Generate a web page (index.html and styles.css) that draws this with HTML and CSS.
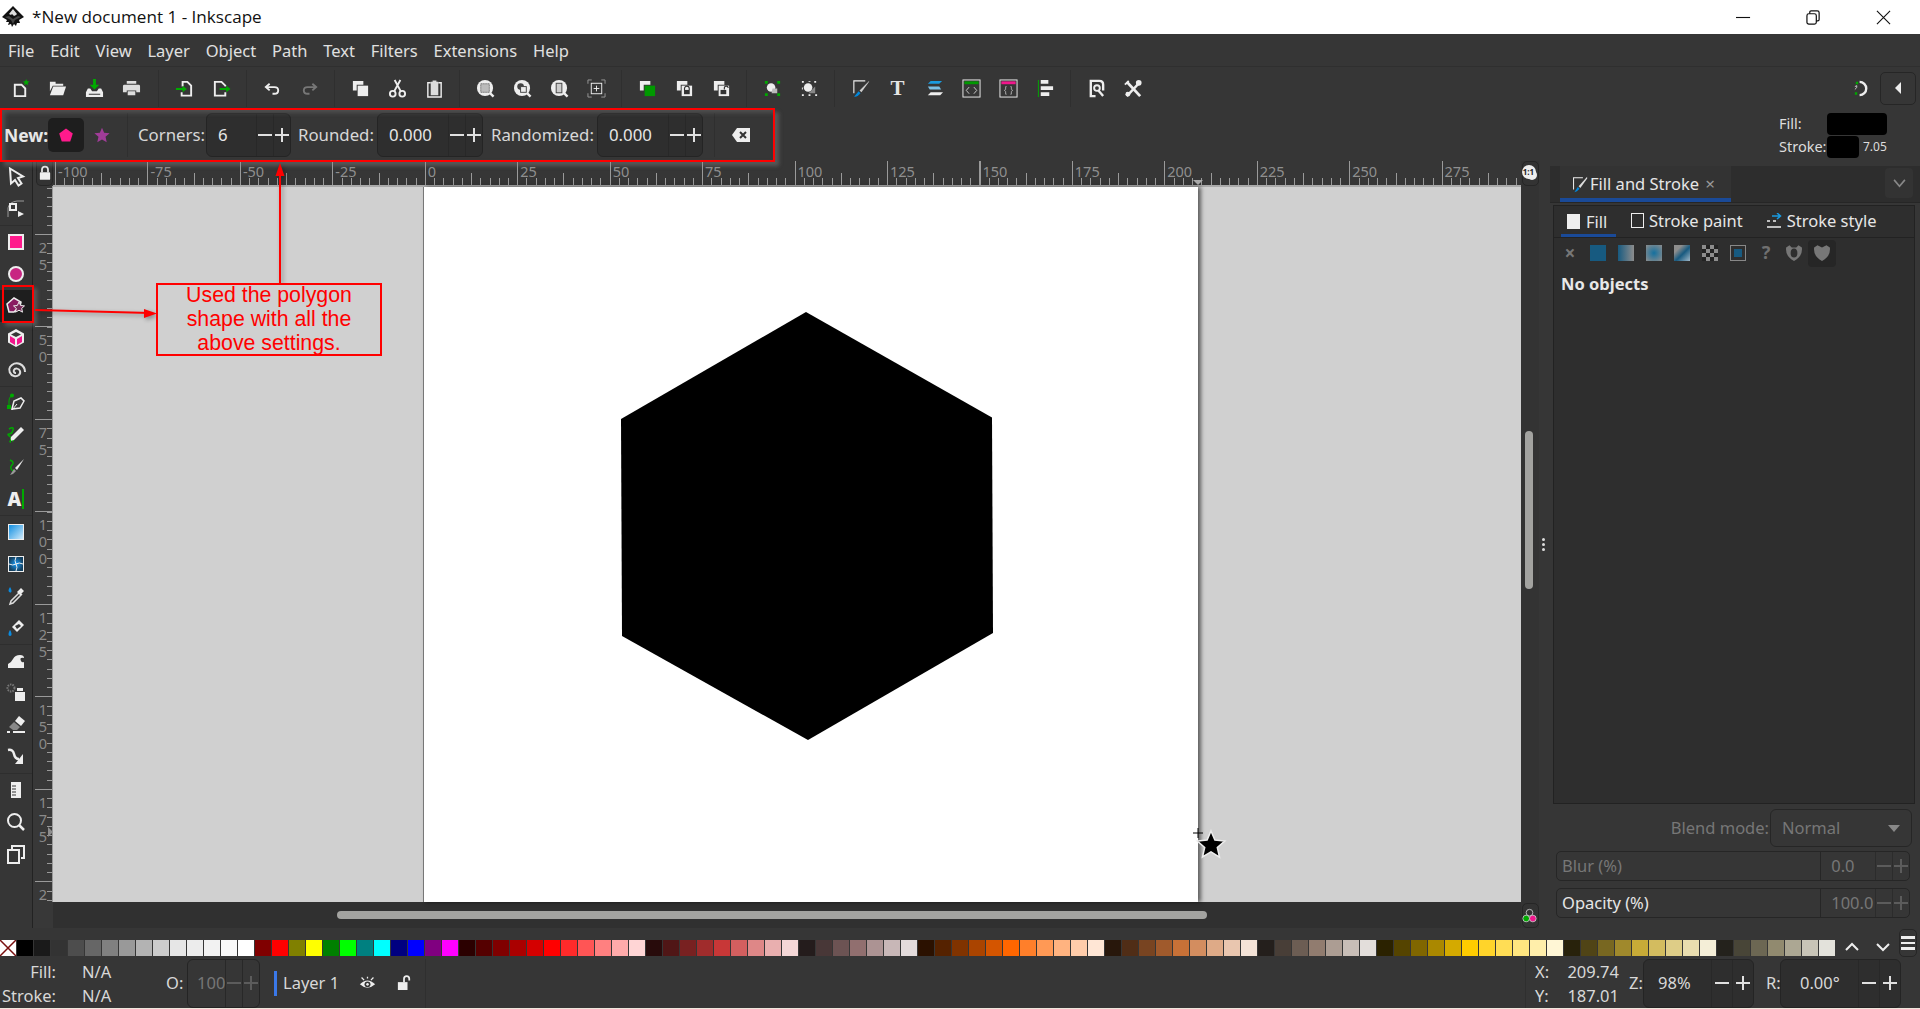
FILE: index.html
```html
<!DOCTYPE html>
<html lang="en">
<head>
<meta charset="utf-8">
<title>*New document 1 - Inkscape</title>
<link rel="stylesheet" href="styles.css">
</head>
<body>
<div class="app">

<header class="titlebar">
  <svg class="logo" viewBox="0 0 24 24"><path d="M12 1L1 12l5 3-1 2h3l-1 3 3-1 1 3 2-3 2 2 1-3h3l-1-3 5-3z" fill="#111"/><path d="M12 4l-4 5 2 1 1-1 2 2 2-1 1-1z" fill="#ddd"/><path d="M4 12l4-1 4 3 5-3 3 1-6 3-2 4-2-4z" fill="#444"/></svg>
  <span class="doc-title">*New document 1 - Inkscape</span>
  <div class="winbtns">
    <svg viewBox="0 0 16 16"><path d="M0 8h15" stroke="#111" stroke-width="1.2"/></svg>
    <svg viewBox="0 0 16 16"><rect x="1" y="4" width="10" height="11" rx="2" fill="none" stroke="#111" stroke-width="1.3"/><path d="M4 4V2.500Q4 1 5.500 1H12q2 0 2 2v7q0 1.500-1.500 1.500H11" fill="none" stroke="#111" stroke-width="1.3"/></svg>
    <svg viewBox="0 0 16 16"><path d="M1 1l14 14M15 1L1 15" stroke="#111" stroke-width="1.2"/></svg>
  </div>
</header>

<nav class="menubar">
  <span>File</span><span>Edit</span><span>View</span><span>Layer</span><span>Object</span><span>Path</span><span>Text</span><span>Filters</span><span>Extensions</span><span>Help</span>
</nav>

<div class="commandbar">
  <div class="cgroup first">
    <svg class="ic" viewBox="0 0 20 20"><path d="M4 6h7l4 4v8H4z" fill="none" stroke="#eee" stroke-width="2"/><path d="M16 0l1 2.400 2.500.2-1.900 1.600.6 2.400-2.200-1.300-2.200 1.300.6-2.400-1.900-1.600 2.500-.2z" fill="#0a0"/></svg>
    <svg class="ic" viewBox="0 0 20 20"><path d="M2 3h6v2h8v2H5l-3 6z" fill="#eee"/><path d="M5.500 8H19l-3 9H2z" fill="#eee"/></svg>
    <svg class="ic" viewBox="0 0 20 20"><path d="M8.500 0h3v6H15l-5 5-5-5h3.500z" fill="#0a0"/><path d="M3 10h2.500l2 3h5l2-3H17l2 4v5H1v-5zM4 15.500v1h12v-1z" fill="#eee" fill-rule="evenodd"/></svg>
    <svg class="ic" viewBox="0 0 20 20"><path d="M5 2h10v3H5zM1 7.500Q1 6 2.500 6h15Q19 6 19 7.500V14h-4v-2H5v2H1zM6 13h8v4H6z" fill="#ddd"/></svg>
  </div>
  <div class="cgroup">
    <svg class="ic" viewBox="0 0 20 20"><path d="M8 8V3h5l4 4v10.500H7V14" fill="none" stroke="#eee" stroke-width="2"/><path d="M1 9.500h7V7l4.500 3.500L8 14v-2.500H1z" fill="#0a0"/></svg>
    <svg class="ic" viewBox="0 0 20 20"><path d="M14 8V7l-4-4H3v14.500h11V14" fill="none" stroke="#eee" stroke-width="2"/><path d="M8 9.500h7V7l4.500 3.500L15 14v-2.500H8z" fill="#0a0"/></svg>
  </div>
  <div class="cgroup">
    <svg class="ic" viewBox="0 0 20 20"><path d="M7 5L3 8.500 7 12" fill="none" stroke="#eee" stroke-width="2"/><path d="M4 8.500h8q4 0 4 3.500t-4 3.500h-2" fill="none" stroke="#eee" stroke-width="2"/></svg>
    <svg class="ic" viewBox="0 0 20 20"><path d="M13 5l4 3.500-4 3.500" fill="none" stroke="#777" stroke-width="2"/><path d="M16 8.500H8Q4 8.500 4 12t4 3.500h2" fill="none" stroke="#777" stroke-width="2"/></svg>
  </div>
  <div class="cgroup">
    <svg class="ic" viewBox="0 0 20 20"><path d="M2 2h11v4H6v6H2z" fill="#eee"/><rect x="7" y="7" width="11" height="11" fill="#eee"/></svg>
    <svg class="ic" viewBox="0 0 20 20"><circle cx="5" cy="15.500" r="3" fill="none" stroke="#eee" stroke-width="2"/><circle cx="15" cy="15.500" r="3" fill="none" stroke="#eee" stroke-width="2"/><path d="M6.500 13L13 1M13.500 13L7 1" stroke="#eee" stroke-width="2"/></svg>
    <svg class="ic" viewBox="0 0 20 20"><path d="M6 4H3v15h14V4h-3" fill="none" stroke="#eee" stroke-width="1.500"/><path d="M6 3h2V1.500h4V3h2v14H6z" fill="#ddd"/></svg>
  </div>
  <div class="cgroup">
    <svg class="ic" viewBox="0 0 20 20"><path d="M14 14l4.500 4.500" stroke="#eee" stroke-width="2.500"/><circle cx="9.500" cy="9.500" r="8.500" fill="#eee"/><rect x="5" y="5" width="9" height="9" fill="#bbb" stroke="#444" stroke-dasharray="1 1"/></svg>
    <svg class="ic" viewBox="0 0 20 20"><path d="M14 14l4.500 4.500" stroke="#eee" stroke-width="2.500"/><circle cx="9.500" cy="9.500" r="8.500" fill="#eee"/><circle cx="8" cy="8" r="3.500" fill="#444"/><rect x="8" y="8" width="6" height="6" fill="#eee" stroke="#444"/></svg>
    <svg class="ic" viewBox="0 0 20 20"><path d="M14 14l4.500 4.500" stroke="#eee" stroke-width="2.500"/><circle cx="9.500" cy="9.500" r="8.500" fill="#eee"/><rect x="6" y="4" width="7" height="11" fill="#444"/><rect x="7" y="5" width="5" height="9" fill="#ccc"/></svg>
    <svg class="ic" viewBox="0 0 20 20"><path d="M1 5V1h4M15 1h4v4M19 15v4h-4M5 19H1v-4" fill="none" stroke="#999"/><rect x="4.500" y="4.500" width="11" height="11" fill="none" stroke="#eee"/><path d="M10 7v6M7 10h6" stroke="#eee"/></svg>
  </div>
  <div class="cgroup">
    <svg class="ic" viewBox="0 0 20 20"><path d="M2 2h11v4H6v6H2z" fill="#eee"/><rect x="7" y="7" width="11" height="11" fill="#090"/></svg>
    <svg class="ic" viewBox="0 0 20 20"><path d="M2 2h11v4H6v6H2z" fill="#eee"/><rect x="7" y="7" width="11" height="11" fill="#eee"/><path d="M10 11.500V10a2.500 2.500 0 0 1 5 0v1.500" fill="none" stroke="#333" stroke-width="1.200"/><rect x="9.500" y="11.500" width="6" height="4.500" fill="#333"/></svg>
    <svg class="ic" viewBox="0 0 20 20"><path d="M2 2h11v4H6v6H2z" fill="#eee"/><rect x="7" y="7" width="11" height="11" fill="#eee"/><path d="M13 11V9.500a2 2 0 0 1 4 0" fill="none" stroke="#333" stroke-width="1.200"/><rect x="9" y="11.500" width="6" height="4.500" fill="#333"/></svg>
  </div>
  <div class="cgroup">
    <svg class="ic" viewBox="0 0 20 20"><path d="M2 2h3v3H2zM15 2h3v3h-3zM2 15h3v3H2zM15 15h3v3h-3z" fill="#0a0"/><circle cx="8.500" cy="9" r="4.500" fill="#eee"/><path d="M10 10h5v5h-6z" fill="#bbb"/></svg>
    <svg class="ic" viewBox="0 0 20 20"><path d="M2 2h2v2H2zM15 2h2v2h-2zM2 16h2v2H2zM9 16h2v2H9zM16 16h2v2h-2zM2 9h1v2H2zM9 2h2v1H9z" fill="#eee"/><circle cx="8.500" cy="9" r="4.500" fill="#eee"/><path d="M16 8v7H9z" fill="#888"/></svg>
  </div>
  <div class="cgroup">
    <svg class="ic" viewBox="0 0 20 20"><path d="M15 2H3v13" fill="none" stroke="#eee" stroke-width="1.200"/><path d="M19 2L9 12l2 2L19 3z" fill="#ccc"/><path d="M8 13l2 2-3 3-4 1z" fill="#08d"/></svg>
    <span class="ic glyph-t">T</span>
    <svg class="ic" viewBox="0 0 20 20"><path d="M6 2h12l-3 3H3z" fill="#1a9be0"/><path d="M3 8h12l2 3H5z" fill="#7bc0e6"/><path d="M6 14h13l-3 3H3z" fill="#eee"/></svg>
    <svg class="ic" viewBox="0 0 20 20"><rect x="1" y="1" width="18" height="18" fill="none" stroke="#eee"/><rect x="2.500" y="2.500" width="15" height="3" fill="#090"/><path d="M7.500 8.500L4.500 12l3 3.500M12.500 8.500l3 3.500-3 3.500" fill="none" stroke="#ccc"/></svg>
    <svg class="ic" viewBox="0 0 20 20"><rect x="1" y="1" width="18" height="18" fill="none" stroke="#eee"/><rect x="2.500" y="2.500" width="15" height="3" fill="#f1168c"/><path d="M8 8H7v3l-1.500 1L7 13v3h1M12 8h1v3l1.500 1-1.500 1v3h-1" fill="none" stroke="#aaa"/></svg>
    <svg class="ic" viewBox="0 0 20 20"><path d="M2.500 1v18" stroke="#0a0"/><path d="M5 1h8v4H5zM5 7.500h13v4H5zM5 14h9v4H5z" fill="#eee"/></svg>
  </div>
  <div class="cgroup last">
    <svg class="ic" viewBox="0 0 20 20"><path d="M9 18H4V2h9q4 0 4 4v6" fill="none" stroke="#eee" stroke-width="2.500"/><circle cx="10.500" cy="9.500" r="3" fill="none" stroke="#eee" stroke-width="2"/><path d="M12 12l5 6" stroke="#eee" stroke-width="2.500"/></svg>
    <svg class="ic" viewBox="0 0 20 20"><path d="M3 3l14 15" stroke="#eee" stroke-width="3"/><path d="M17 3L3 18" stroke="#eee" stroke-width="2.500"/><path d="M1 6l4-4" stroke="#eee" stroke-width="2"/><circle cx="15.500" cy="4" r="3" fill="#eee"/><circle cx="4" cy="16" r="2.500" fill="#eee"/></svg>
  </div>
  <div class="snap">
    <svg class="ic" viewBox="0 0 20 20"><path d="M8 3a7 7 0 1 1 0 14" fill="none" stroke="#eee" stroke-width="2.500"/><path d="M4 3h2.500v2.500H4zM3 14h2.500v2.500H3z" fill="#0a0"/><path d="M3 8l2-1v2l-2 2" fill="none" stroke="#ccc"/></svg>
    <div class="snap-btn"><span class="tri-left"></span></div>
  </div>
</div>

<div class="toolctl">
  <b class="new-lbl">New:</b>
  <div class="shape-btn on"><svg viewBox="0 0 20 20"><path d="M10 2l8.500 6.200-3.200 9.800H4.700L1.500 8.200z" fill="#ff1a8c"/></svg></div>
  <div class="shape-btn"><svg viewBox="0 0 20 20"><path d="M10 1l2.700 6.200 6.800.6-5.100 4.500 1.500 6.700L10 15.500 4.100 19l1.500-6.700L.5 7.800l6.800-.6z" fill="#a03c98"/></svg></div>
  <span class="vsep"></span>
  <span class="lbl w-corners">Corners:</span>
  <div class="spin s-corners"><span class="val">6</span><span class="sb minus"></span><span class="sb plus"></span></div>
  <span class="lbl w-rounded">Rounded:</span>
  <div class="spin s-rounded"><span class="val">0.000</span><span class="sb minus"></span><span class="sb plus"></span></div>
  <span class="lbl w-random">Randomized:</span>
  <div class="spin s-rounded"><span class="val">0.000</span><span class="sb minus"></span><span class="sb plus"></span></div>
  <span class="vsep s2"></span>
  <svg class="clear" viewBox="0 0 18 14"><path d="M5 0h13v14H5L0 7z" fill="#eee"/><path d="M8 4l6 6M14 4l-6 6" stroke="#333" stroke-width="2"/></svg>
  <div class="selstyle">
    <div class="ss-row"><span class="ss-lbl">Fill:</span><span class="ss-fill"></span></div>
    <div class="ss-row"><span class="ss-lbl">Stroke:</span><span class="ss-stroke"></span><span class="ss-w">7.05</span></div>
  </div>
</div>

<div class="workspace">
  <aside class="tools">
    <div class="tgroup">
      <div class="tool"><svg class="ic" viewBox="0 0 20 20"><path d="M4 1.500l13 8-5 1.500 3.500 5.500-3 2-3.500-5.500-4 3.500z" fill="#363636" stroke="#eee" stroke-width="2"/></svg></div>
      <div class="tool"><svg class="ic" viewBox="0 0 20 20"><path d="M2 18V9q1-6 9-7h7" fill="none" stroke="#999"/><rect x="4" y="5" width="6" height="6" fill="#363636" stroke="#eee" stroke-width="2"/><path d="M12 12l6 3-6 3z" fill="#eee"/></svg></div>
    </div>
    <div class="tgroup">
      <div class="tool"><svg class="ic" viewBox="0 0 20 20"><rect x="3" y="3" width="14" height="14" fill="#ff1a8c" stroke="#eee" stroke-width="2"/></svg></div>
      <div class="tool"><svg class="ic" viewBox="0 0 20 20"><circle cx="10" cy="10" r="7" fill="#c82682" stroke="#eee" stroke-width="2"/></svg></div>
      <div class="tool active"><svg class="ic" viewBox="0 0 20 20"><path d="M8 2l7 4-1 4-6 6H3l-2-8z" fill="#8a1c62" stroke="#eee" stroke-width="1.500"/><path d="M13 6l1.700 3.500 3.800.4-2.800 2.500.8 3.800-3.500-2-3.500 2 .8-3.800-2.800-2.500 3.800-.4z" fill="#7a2a5a" stroke="#eee"/></svg></div>
      <div class="tool"><svg class="ic" viewBox="0 0 20 20"><path d="M10 1l8 4.500v9L10 19l-8-4.500v-9z" fill="#eee"/><path d="M4 8l5 3v6l-5-3z" fill="#f1168c"/><path d="M16 8l-5 3v6l5-3z" fill="#f1168c"/><path d="M10 4l5 2.500-5 2.500-5-2.500z" fill="#363636"/></svg></div>
      <div class="tool"><svg class="ic" viewBox="0 0 20 20"><path d="M10 13a2 2 0 0 1-2-3c1-2 5-2 6 1s-2 6-6 5-6-6-4-9 6-5 10-3 5 6 5 8" fill="none" stroke="#ddd" stroke-width="2"/></svg></div>
    </div>
    <div class="tgroup">
      <div class="tool"><svg class="ic" viewBox="0 0 20 20"><path d="M3 15V8q0-5 5-6" fill="none" stroke="#0a0"/><circle cx="6" cy="2.500" r="2" fill="#0a0"/><rect x="1" y="12" width="4" height="4" fill="#0a0"/><path d="M6 16l2-8 7-3 3 3-4 7z" fill="none" stroke="#eee" stroke-width="1.500"/><path d="M6 17l5-6" stroke="#eee"/></svg></div>
      <div class="tool"><svg class="ic" viewBox="0 0 20 20"><path d="M3 4q5-3 4 1T3 9t3 4q3 2 0 3" fill="none" stroke="#0a0" stroke-width="1.500"/><path d="M15 2l3 3L8 15l-4 1 1-4z" fill="#eee"/><path d="M5 13l-2 4 2 1z" fill="#0a0"/></svg></div>
      <div class="tool"><svg class="ic" viewBox="0 0 20 20"><path d="M4 3q5 2 2 5t1 6" fill="none" stroke="#0a0" stroke-width="1.500"/><path d="M18 2L9 11l2 2z" fill="#eee"/><path d="M8 12l2 2-3 3-3 1z" fill="#999"/></svg></div>
      <div class="tool"><span class="glyph-a">A</span></div>
    </div>
    <div class="tgroup">
      <div class="tool"><svg class="ic" viewBox="0 0 20 20"><defs><linearGradient id="tg" x1="0" y1="0" x2="1" y2="1"><stop offset="0" stop-color="#0a8be0"/><stop offset="1" stop-color="#d8eefb"/></linearGradient></defs><rect x="2.500" y="2.500" width="15" height="15" fill="url(#tg)" stroke="#eee"/></svg></div>
      <div class="tool"><svg class="ic" viewBox="0 0 20 20"><defs><radialGradient id="tm"><stop offset="0" stop-color="#1aa0ff"/><stop offset="1" stop-color="#14405f"/></radialGradient></defs><rect x="2.500" y="2.500" width="15" height="15" fill="url(#tm)" stroke="#eee"/><path d="M3 10q4 2 7 0t7 0M10 3q-2 4 0 7t0 7" fill="none" stroke="#eee"/></svg></div>
      <div class="tool"><svg class="ic" viewBox="0 0 20 20"><path d="M4 1c-2 3-2 5 0 5.500S6 4 4 1z" fill="#0a8be0"/><path d="M14 6L5 15l-1 3 3-1 9-9" fill="none" stroke="#ddd" stroke-width="1.500"/><path d="M12 5l3-3 3 3-3 3 1 1-2 0-3-3z" fill="#eee"/></svg></div>
      <div class="tool"><svg class="ic" viewBox="0 0 20 20"><path d="M4 12c-2 3-2 6 0 6s2-3 0-6z" fill="#0a8be0"/><path d="M6 9l7-7 5 5-7 7z" fill="#eee"/><path d="M9 8l4-2 2 2-4 3z" fill="#363636"/></svg></div>
    </div>
    <div class="tgroup">
      <div class="tool"><svg class="ic" viewBox="0 0 20 20"><path d="M2 17v-4q3-1 5-5t7-4q4 0 4 3-5-1-3 3 1 2 3 1v6z" fill="#eee"/></svg></div>
      <div class="tool"><svg class="ic" viewBox="0 0 20 20"><rect x="9" y="9" width="10" height="9" fill="#eee"/><rect x="11" y="5" width="6" height="3" fill="#eee"/><circle cx="5" cy="5" r="3.500" fill="none" stroke="#777" stroke-width="2" stroke-dasharray="1.500 1"/></svg></div>
      <div class="tool"><svg class="ic" viewBox="0 0 20 20"><path d="M13 1l6 5-4 5-6-5z" fill="#eee"/><path d="M8 7l6 5-3 3H7l-4-3z" fill="#888"/><path d="M1 16h3v2H1zM7 16h12v2H7z" fill="#eee"/></svg></div>
      <div class="tool"><svg class="ic" viewBox="0 0 20 20"><path d="M2 3q5-1 6 4t5 5" fill="none" stroke="#eee" stroke-width="2.500"/><path d="M17 7v10h-8z" fill="#eee"/></svg></div>
    </div>
    <div class="tgroup nb">
      <div class="tool"><svg class="ic" viewBox="0 0 20 20"><path d="M5 2h10v16H5z" fill="#eee"/><path d="M6 6h4M6 9h4M6 12h4M6 15h4" stroke="#333"/></svg></div>
      <div class="tool"><svg class="ic" viewBox="0 0 20 20"><circle cx="8.500" cy="8.500" r="6.500" fill="none" stroke="#eee" stroke-width="2"/><path d="M13 13l5 5" stroke="#eee" stroke-width="2.500"/></svg></div>
      <div class="tool"><svg class="ic" viewBox="0 0 20 20"><rect x="2" y="6" width="11" height="13" fill="none" stroke="#eee" stroke-width="2"/><path d="M6 5V2h12v12h-3" fill="none" stroke="#eee" stroke-width="2"/></svg></div>
    </div>
  </aside>

  <div class="vcol">
    <div class="lockbox"><svg viewBox="0 0 14 18"><path d="M3.500 8V5a3.500 3.500 0 0 1 7 0v3" fill="none" stroke="#eee" stroke-width="2"/><rect x="1" y="8" width="12" height="9" rx="1" fill="#eee"/></svg></div>
    <div class="vruler">
      <div class="vmark">2<br>5</div><div class="vmark">5<br>0</div><div class="vmark">7<br>5</div><div class="vmark">1<br>0<br>0</div><div class="vmark">1<br>2<br>5</div><div class="vmark">1<br>5<br>0</div><div class="vmark">1<br>7<br>5</div><div class="vmark last">2</div>
      <span class="vpointer"></span>
    </div>
  </div>

  <div class="center">
    <div class="hruler">
      <span class="hmark">-100</span><span class="hmark">-75</span><span class="hmark">-50</span><span class="hmark">-25</span><span class="hmark">0</span><span class="hmark">25</span><span class="hmark">50</span><span class="hmark">75</span><span class="hmark">100</span><span class="hmark">125</span><span class="hmark">150</span><span class="hmark">175</span><span class="hmark">200</span><span class="hmark">225</span><span class="hmark">250</span><span class="hmark">275</span>
      <span class="hpointer"></span>
    </div>
    <div class="canvas">
      <div class="page">
        <svg class="art" viewBox="0 1 774 715"><path d="M382 126L568 231.500 569 447 384 554 198 450 197 233z" fill="#000"/></svg>
      </div>
      <svg class="cursor" viewBox="0 0 40 40"><path d="M6 2v10M1 7h10" stroke="#000"/><path d="M19 5l3.900 9.100 9.800.9-7.400 6.500 2.200 9.600L19 25.900 10.500 31l2.200-9.600L5.300 15l9.800-.9z" fill="#000" stroke="#eee" stroke-width="1.500"/></svg>
    </div>
    <div class="hscroll"><span class="hthumb"></span></div>
  </div>

  <div class="rcol">
    <div class="corner-btn one"><span class="one-t">1:1</span></div>
    <span class="vthumb"></span>
    <div class="corner-btn color"><svg viewBox="0 0 18 24"><circle cx="9" cy="8" r="4" fill="none" stroke="#ccc"/><circle cx="5" cy="15" r="4" fill="#0a0" stroke="#ccc"/><circle cx="13" cy="15" r="4" fill="#f1168c" stroke="#ccc"/></svg></div>
  </div>

  <div class="handle"><i></i><i></i><i></i></div>

  <section class="dock">
    <div class="dock-tabs">
      <div class="dock-tab">
        <svg class="ic-s" viewBox="0 0 20 20"><path d="M14 2H3v14" fill="none" stroke="#eee" stroke-width="1.200"/><path d="M19 1L9 12l2 2L19 3z" fill="#ddd"/><path d="M8 13l2 2-3 3-3 1z" fill="#08d"/></svg>
        <span>Fill and Stroke</span><span class="tab-x">×</span>
      </div>
      <div class="dock-menu"><svg viewBox="0 0 14 10"><path d="M1 1l6 7 6-7" fill="none" stroke="#888" stroke-width="1.800"/></svg></div>
    </div>
    <div class="frame">
      <div class="fs-tabs">
        <div class="fs-tab on"><span class="box-fill"></span>Fill</div>
        <div class="fs-tab t2"><span class="box-stroke"></span>Stroke paint</div>
        <div class="fs-tab t3"><svg class="ic-m" viewBox="0 0 16 16"><path d="M6 3h8M11 0l3.500 3L11 6" fill="none" stroke="#1a9be0" stroke-width="1.500"/><path d="M1 8h3M7 8h3M1 14h14" stroke="#eee" stroke-width="1.500"/></svg>Stroke style</div>
      </div>
      <div class="paints">
        <span class="paint"><span class="p-x">×</span></span>
        <span class="paint"><span class="p flat"></span></span>
        <span class="paint"><span class="p lin"></span></span>
        <span class="paint"><span class="p rad"></span></span>
        <span class="paint"><span class="p mesh"></span></span>
        <span class="paint"><span class="p pat"></span></span>
        <span class="paint"><span class="p swa"></span></span>
        <span class="paint"><span class="p-q">?</span></span>
        <span class="paint"><svg class="ic-m" viewBox="0 0 16 16"><path d="M1 3l3-2 2 2h4l2-2 3 2q1 8-7 12Q0 11 1 3z" fill="#777"/><ellipse cx="8" cy="8" rx="3" ry="4" fill="#2e2e2e"/></svg></span>
        <span class="paint sel"><svg class="ic-m" viewBox="0 0 16 16"><path d="M1 3l3-2 4 2 4-2 3 2q1 8-7 12Q0 11 1 3z" fill="#777"/></svg></span>
      </div>
      <b class="noobj">No objects</b>
    </div>
    <div class="blend-row">
      <span class="dim">Blend mode:</span>
      <div class="combo"><span class="dim">Normal</span><span class="tri-down"></span></div>
    </div>
    <div class="slider-row">
      <span class="sl-lbl dim">Blur (%)</span>
      <span class="sl-val dim">0.0</span><span class="sb minus off"></span><span class="sb plus off"></span>
    </div>
    <div class="slider-row second">
      <span class="sl-lbl">Opacity (%)</span>
      <span class="sl-val dim">100.0</span><span class="sb minus off"></span><span class="sb plus off"></span>
    </div>
  </section>
</div>

<div class="palette">
  <div class="swatches">
    <span class="sw none"><svg viewBox="0 0 16 16" preserveAspectRatio="none"><path d="M0 0l16 16M16 0L0 16" stroke="#7a1010" stroke-width="1.500"/></svg></span>
    <span class="sw" style="background:#000"></span><span class="sw" style="background:#1a1a1a"></span><span class="sw" style="background:#333"></span><span class="sw" style="background:#4d4d4d"></span><span class="sw" style="background:#666"></span><span class="sw" style="background:#808080"></span><span class="sw" style="background:#999"></span><span class="sw" style="background:#b3b3b3"></span><span class="sw" style="background:#ccc"></span><span class="sw" style="background:#e6e6e6"></span><span class="sw" style="background:#ececec"></span><span class="sw" style="background:#f2f2f2"></span><span class="sw" style="background:#f9f9f9"></span><span class="sw" style="background:#fff"></span>
    <span class="sw" style="background:#800000"></span><span class="sw" style="background:#f00"></span><span class="sw" style="background:#808000"></span><span class="sw" style="background:#ff0"></span><span class="sw" style="background:#008000"></span><span class="sw" style="background:#0f0"></span><span class="sw" style="background:#008080"></span><span class="sw" style="background:#0ff"></span><span class="sw" style="background:#000080"></span><span class="sw" style="background:#00f"></span><span class="sw" style="background:#800080"></span><span class="sw" style="background:#f0f"></span>
    <span class="sw" style="background:#2b0000"></span><span class="sw" style="background:#500"></span><span class="sw" style="background:#800000"></span><span class="sw" style="background:#a00"></span><span class="sw" style="background:#d40000"></span><span class="sw" style="background:#f00"></span><span class="sw" style="background:#ff2a2a"></span><span class="sw" style="background:#f55"></span><span class="sw" style="background:#ff8080"></span><span class="sw" style="background:#faa"></span><span class="sw" style="background:#ffd5d5"></span>
    <span class="sw" style="background:#280b0b"></span><span class="sw" style="background:#501616"></span><span class="sw" style="background:#782121"></span><span class="sw" style="background:#a02c2c"></span><span class="sw" style="background:#c83737"></span><span class="sw" style="background:#d35f5f"></span><span class="sw" style="background:#de8787"></span><span class="sw" style="background:#e9afaf"></span><span class="sw" style="background:#f4d7d7"></span>
    <span class="sw" style="background:#241c1c"></span><span class="sw" style="background:#483737"></span><span class="sw" style="background:#6c5353"></span><span class="sw" style="background:#916f6f"></span><span class="sw" style="background:#ac9393"></span><span class="sw" style="background:#c8b7b7"></span><span class="sw" style="background:#e3dbdb"></span>
    <span class="sw" style="background:#2b1100"></span><span class="sw" style="background:#520"></span><span class="sw" style="background:#803300"></span><span class="sw" style="background:#a40"></span><span class="sw" style="background:#d45500"></span><span class="sw" style="background:#f60"></span><span class="sw" style="background:#ff7f2a"></span><span class="sw" style="background:#f95"></span><span class="sw" style="background:#ffb380"></span><span class="sw" style="background:#fca"></span><span class="sw" style="background:#ffe6d5"></span>
    <span class="sw" style="background:#28170b"></span><span class="sw" style="background:#502d16"></span><span class="sw" style="background:#784421"></span><span class="sw" style="background:#a05a2c"></span><span class="sw" style="background:#c87137"></span><span class="sw" style="background:#d38d5f"></span><span class="sw" style="background:#deaa87"></span><span class="sw" style="background:#e9c6af"></span><span class="sw" style="background:#f4e3d7"></span>
    <span class="sw" style="background:#241f1c"></span><span class="sw" style="background:#483e37"></span><span class="sw" style="background:#6c5d53"></span><span class="sw" style="background:#917c6f"></span><span class="sw" style="background:#ac9d93"></span><span class="sw" style="background:#c8beb7"></span><span class="sw" style="background:#e3dedb"></span>
    <span class="sw" style="background:#2b2200"></span><span class="sw" style="background:#540"></span><span class="sw" style="background:#806600"></span><span class="sw" style="background:#a80"></span><span class="sw" style="background:#d4aa00"></span><span class="sw" style="background:#fc0"></span><span class="sw" style="background:#ffd42a"></span><span class="sw" style="background:#fd5"></span><span class="sw" style="background:#ffe680"></span><span class="sw" style="background:#fea"></span><span class="sw" style="background:#fff6d5"></span>
    <span class="sw" style="background:#28220b"></span><span class="sw" style="background:#504416"></span><span class="sw" style="background:#786721"></span><span class="sw" style="background:#a0892c"></span><span class="sw" style="background:#c8ab37"></span><span class="sw" style="background:#d3bc5f"></span><span class="sw" style="background:#decd87"></span><span class="sw" style="background:#e9ddaf"></span><span class="sw" style="background:#f4eed7"></span>
    <span class="sw" style="background:#24221c"></span><span class="sw" style="background:#484537"></span><span class="sw" style="background:#6c6753"></span><span class="sw" style="background:#918a6f"></span><span class="sw" style="background:#aca793"></span><span class="sw" style="background:#c8c4b7"></span><span class="sw" style="background:#e3e2db"></span>
  </div>
  <svg class="chev up" viewBox="0 0 14 10"><path d="M1 8l6-6 6 6" fill="none" stroke="#eee" stroke-width="2"/></svg>
  <svg class="chev" viewBox="0 0 14 10"><path d="M1 2l6 6 6-6" fill="none" stroke="#eee" stroke-width="2"/></svg>
  <div class="pal-menu"><i></i><i></i><i></i></div>
</div>

<footer class="status">
  <div class="st-style">
    <span class="st-l">Fill:</span><span>N/A</span>
    <span class="st-l">Stroke:</span><span>N/A</span>
  </div>
  <span class="st-o">O:</span>
  <div class="spin s-o"><span class="val dim">100</span><span class="sb minus off"></span><span class="sb plus off"></span></div>
  <span class="layer-mark"></span>
  <span class="layer-name">Layer 1</span>
  <svg class="st-eye" viewBox="0 0 20 16"><path d="M3 1l3 3M17 1l-3 3M10 0v2" stroke="#eee" stroke-width="1.500"/><path d="M1 9q9-9 18 0-9 8-18 0z" fill="#eee"/><circle cx="10" cy="9" r="3.500" fill="#333"/><circle cx="10" cy="9" r="1.500" fill="#eee"/></svg>
  <svg class="st-lock" viewBox="0 0 16 18"><path d="M8 8V4a3 3 0 0 1 6 0v2" fill="none" stroke="#eee" stroke-width="2"/><rect x="1" y="8" width="11" height="9" fill="#eee"/></svg>
  <span class="st-sep"></span>
  <div class="st-right">
    <div class="coords"><span>X:</span><span class="num">209.74</span><span>Y:</span><span class="num">187.01</span></div>
    <span class="st-z">Z:</span>
    <div class="spin s-z"><span class="val">98%</span><span class="sb minus"></span><span class="sb plus"></span></div>
    <span class="st-r">R:</span>
    <div class="spin s-r"><span class="val">0.00°</span><span class="sb minus"></span><span class="sb plus"></span></div>
  </div>
</footer>

<div class="anno-controls"></div>
<div class="anno-tool"></div>
<svg class="anno-arrows" viewBox="0 0 1920 1009"><path d="M280 283V172" stroke="#f00" stroke-width="2"/><path d="M280 163l4.500 13h-9z" fill="#f00"/><path d="M35 310l115 3" stroke="#f00" stroke-width="2"/><path d="M157 313.500l-13 4.500v-9z" fill="#f00"/></svg>
<div class="anno-note"><div class="note-text">Used the polygon<br>shape with all the<br>above settings.</div></div>

</div>
</body>
</html>
```
FILE: styles.css
```css
* { box-sizing: border-box; }
html, body { margin: 0; padding: 0; }
body { width: 1920px; height: 1009px; overflow: hidden; background: #363636; }
.app {
  position: relative; width: 1920px; height: 1009px; overflow: hidden;
  display: flex; flex-direction: column;
  background: #363636; color: #e6e6e6;
  border-bottom: 1px solid #f0e6dc;
  font-family: "Noto Sans", "Open Sans", sans-serif; font-size: 16.5px; line-height: 1.2;
}
svg { display: block; flex: none; }
.dim { color: #777; }

/* title bar */
.titlebar { flex: 0 0 34px; background: #fff; color: #111; display: flex; align-items: center; }
.logo { width: 24px; height: 24px; margin-left: 1px; }
.doc-title { margin-left: 7px; font-size: 17.100px; font-family: "Open Sans", "Noto Sans", sans-serif; }
.winbtns { margin-left: auto; display: flex; gap: 55px; margin-right: 29px; }
.winbtns svg { width: 15px; height: 15px; }

/* menu */
.menubar { flex: 0 0 33px; display: flex; align-items: center; gap: 15.800px; padding: 2px 0 0 8px; border-bottom: 1px solid #2f2f2f; color: #e0e0e0; }

/* command bar */
.commandbar { flex: 0 0 41px; display: flex; align-items: center; }
.cgroup { display: flex; height: 37px; align-items: center; padding: 0 6px 0 7px; border-right: 1px solid #2f2f2f; margin-top: 1px; }
.cgroup.first { padding: 0 8px 0 2px; }
.cgroup.last { border-right: 0; }
.ic { width: 19px; height: 19px; margin: 0 9px; flex: none; }
.glyph-t { font: 700 21px/19px "Liberation Serif", serif; color: #e4e4e4; text-align: center; display: block; }
.glyph-a { font: 800 19px/20px "Open Sans", sans-serif; color: #eee; border-right: 2px solid #0a0; padding-right: 1px; height: 20px; display: block; }
.snap { margin-left: auto; display: flex; align-items: center; margin-right: 4px; margin-top: 1px; }
.snap .ic { margin: 0 9px 0 0; }
.snap-btn { width: 36px; height: 33px; border: 1px solid #262626; border-radius: 5px; display: flex; align-items: center; justify-content: center; }
.tri-left { width: 0; height: 0; border: 6px solid transparent; border-left: 0; border-right: 6px solid #eee; }

/* tool controls */
.toolctl { flex: 0 0 53px; display: flex; align-items: center; padding: 1px 0 0 5px; font-size: 16.800px; }
.new-lbl { width: 43px; font-size: 17.500px; color: #e8e8e8; margin-left: -1px; margin-right: 1px; }
.shape-btn { width: 36px; height: 34px; border-radius: 5px; display: flex; align-items: center; justify-content: center; }
.shape-btn.on { background: #1e1e1e; }
.shape-btn svg { width: 16px; height: 16px; }
.vsep { width: 1px; height: 44px; background: #2f2f2f; margin: 0 10px 0 7px; }
.vsep.s2 { margin: 0 0 0 11px; }
.lbl { color: #d8d8d8; flex: none; }
.w-corners { width: 68px; }
.w-rounded { width: 79px; margin-left: 7px; }
.w-random { width: 106px; margin-left: 8px; }
.spin { display: flex; flex: none; height: 44px; background: #2e2e2e; border: 1px solid #242424; border-radius: 6px; align-items: stretch; }
.spin .val { flex: 1; display: flex; align-items: center; padding-left: 11px; }
.spin .sb { width: 17px; flex: none; border-left: 1px solid #282828; }
.s-corners { width: 85px; }
.s-rounded { width: 106px; }
.sb {
  --c: #e0e0e0;
  background: linear-gradient(var(--c), var(--c)) center / 14px 2px no-repeat;
}
.sb.plus {
  background:
    linear-gradient(var(--c), var(--c)) center / 14px 2px no-repeat,
    linear-gradient(var(--c), var(--c)) center / 2px 14px no-repeat;
}
.sb.off { --c: #5c5c5c; }
.clear { width: 18px; height: 14px; margin-left: 17px; }
.selstyle { margin-left: auto; width: 141px; margin-top: 1px; }
.ss-row { display: flex; height: 23px; align-items: center; }
.ss-lbl { width: 48px; font-size: 14.500px; color: #ddd; }
.ss-fill { width: 60px; height: 22px; background: #000; border-radius: 4px; }
.ss-stroke { width: 32px; height: 22px; background: #000; border-radius: 4px; }
.ss-w { font-size: 12px; margin-left: 4px; color: #ddd; }

/* workspace */
.workspace { flex: 0 0 767px; display: flex; min-height: 0; }
.tools { flex: 0 0 33px; border-right: 1px solid #222; height: 767px; }
.tgroup { border-bottom: 1px solid #2e2e2e; }
.tgroup.nb { border-bottom: 0; }
.tool { height: 32px; display: flex; align-items: center; justify-content: center; }
.tool .ic { margin: 0; width: 20px; height: 20px; }
.tool.active { background: #1e1e1e; }

.vcol { flex: 0 0 19px; display: flex; flex-direction: column; background: #383838; }
.lockbox { height: 25px; margin-left: 3px; width: 17px; background: #333; border: 1px solid #262626; border-top: 0; border-radius: 0 0 5px 5px; display: flex; align-items: center; justify-content: center; }
.lockbox svg { width: 12px; height: 16px; }
.vruler {
  position: relative; height: 720px; padding-top: 48px; overflow: hidden;
  color: #8a8a8a; font-size: 14.500px; line-height: 17px; text-align: center;
  background:
    linear-gradient(#383838, #383838) 0 100% / 100% 4px no-repeat,
    linear-gradient(#9a9a9a, #9a9a9a) 100% 0 / 1px 716px no-repeat,
    repeating-linear-gradient(180deg, #9a9a9a 0 1px, transparent 1px 92.45px) 2px 48px / 100% 100% no-repeat,
    repeating-linear-gradient(180deg, #9a9a9a 0 1px, transparent 1px 9.245px) right 0 top 1.8px / 6px 100% no-repeat;
}
.vmark { height: 92.450px; padding-top: 5px; }
.vpointer { position: absolute; top: 641px; right: 0; width: 0; height: 0; border: 5px solid transparent; border-right: 0; border-left: 5px solid #8d8d8d; }

.center { flex: 0 0 1468px; display: flex; flex-direction: column; min-width: 0; }
.hruler {
  position: relative; flex: 0 0 26px; display: flex; padding-left: 2px; overflow: hidden;
  color: #8f8f8f; font-size: 14.500px; line-height: 18px;
  border-bottom: 2px solid #aaa;
  background:
    repeating-linear-gradient(90deg, #9a9a9a 0 1px, transparent 1px 92.45px) 2px 0 / 100% 100% no-repeat,
    repeating-linear-gradient(90deg, #9a9a9a 0 1px, transparent 1px 46.225px) 2px 100% / 100% 12px no-repeat,
    repeating-linear-gradient(90deg, #9a9a9a 0 1px, transparent 1px 9.245px) 2px 100% / 100% 7px no-repeat;
}
.hmark { flex: 0 0 92.450px; padding: 1px 0 0 3px; }
.hpointer { position: absolute; left: 1140px; bottom: 0; width: 0; height: 0; border: 5px solid transparent; border-bottom: 0; border-top: 5px solid #aaa; }
.canvas { position: relative; flex: 0 0 715px; background: #d0d0d0; }
.page { position: absolute; left: 370px; top: 0; width: 775px; height: 715px; background: #fff; border-left: 1px solid #777; box-shadow: 3px 0 4px rgba(0,0,0,.55); }
.art { width: 774px; height: 715px; }
.cursor { position: absolute; left: 1139px; top: 639px; width: 40px; height: 40px; overflow: visible; }
.hscroll { flex: 1; background: #303030; padding: 9px 0 0 284px; }
.hthumb { display: block; width: 870px; height: 8px; background: #a3a3a0; border-radius: 4px; }

.rcol { flex: 0 0 18px; display: flex; flex-direction: column; align-items: center; background: #333; }
.corner-btn { width: 17px; height: 25px; background: #333; border: 1px solid #262626; border-radius: 5px; display: flex; align-items: center; justify-content: center; position: relative; }
.corner-btn svg { width: 15px; height: 20px; margin-left: -2px; }
.one-t { width: 14px; height: 14px; flex: none; border-radius: 50%; background: #eee; color: #222; font-size: 8px; font-weight: 700; line-height: 14px; text-align: center; margin: -3px 0 0 -3px; display: block; box-shadow: 3px 3px 0 -2px #eee; }
.vthumb { display: block; width: 8px; height: 158px; margin: 245px 0 0 -3px; background: #a3a3a0; border-radius: 4px; }
.corner-btn.color { margin-top: auto; }
.handle { flex: 0 0 11px; display: flex; flex-direction: column; align-items: center; justify-content: center; gap: 2px; padding-right: 2px; }
.handle i { width: 3px; height: 3px; border-radius: 50%; background: #ddd; }

/* dock */
.dock { flex: 0 0 371px; padding-top: 5px; display: flex; flex-direction: column; }
.dock-tabs { flex: 0 0 37px; display: flex; background: #2d2d2d; padding-left: 10px; position: relative; border-bottom: 1px solid #262626; }
.dock-tab { width: 171px; background: #333; border-bottom: 4px solid #1a4a98; display: flex; align-items: center; padding: 4px 0 0 11px; }
.ic-s { width: 17px; height: 19px; margin-right: 2px; }
.tab-x { color: #999; margin-left: 6px; font-size: 17px; }
.dock-menu { position: absolute; left: 335px; top: 2px; width: 28px; height: 30px; background: #333; border-radius: 4px; display: flex; align-items: center; justify-content: center; }
.dock-menu svg { width: 13px; height: 9px; }
.frame { margin: 2px 0 0 3px; width: 362px; flex: 0 0 599px; background: #2e2e2e; border: 1px solid #222; display: flex; flex-direction: column; }
.fs-tabs { flex: 0 0 29px; display: flex; border-bottom: 1px solid #222; position: relative; }
.fs-tab { display: flex; align-items: center; height: 29px; position: relative; }
.fs-tab.on { margin-left: 7px; width: 55px; padding-left: 6px; box-shadow: inset 0 -3px 0 #1a4a98; height: 31px; }
.fs-tab.t2 { margin-left: 15px; }
.fs-tab.t3 { margin-left: 23px; }
.box-fill { width: 13px; height: 15px; background: #eee; margin-right: 6px; }
.box-stroke { width: 13px; height: 15px; border: 1.500px solid #eee; margin-right: 5px; }
.ic-m { width: 16px; height: 16px; margin-right: 5px; }
.paints { flex: 0 0 30px; display: flex; align-items: center; padding-left: 2px; }
.paint { width: 28px; height: 27px; display: flex; align-items: center; justify-content: center; flex: none; border-radius: 4px; }
.paint .ic-m { margin: 0; width: 18px; height: 18px; }
.paint.sel { background: #262626; }
.p { width: 16px; height: 16px; display: block; }
.p-x { color: #777; font-weight: 700; font-size: 19px; }
.p-q { color: #707070; font-weight: 700; font-size: 18px; }
.flat { background: #175a80; }
.lin { background: linear-gradient(90deg, #175a80, #8d8d8d); }
.rad { background: radial-gradient(circle, #14709f 0, #8d8d8d 100%); }
.mesh { background: linear-gradient(135deg, #8d8d8d 0, #8d8d8d 25%, #175a80 55%, #a0b8c8 100%); }
.pat { background: conic-gradient(#222 25%, #8d8d8d 0 50%, #222 0 75%, #8d8d8d 0) 0 0 / 8px 8px; }
.swa { background: #175a80; border: 3px solid #2e2e2e; box-shadow: 0 0 0 1px #888; width: 14px; height: 14px; }
.noobj { margin: 6px 0 0 7px; font-size: 16.500px; color: #e8e8e8; }
.blend-row { margin-top: 5px; flex: 0 0 38px; display: flex; justify-content: flex-end; align-items: center; padding-right: 9px; }
.combo { width: 142px; height: 38px; border: 1px solid #262626; border-radius: 6px; margin-left: 1px; display: flex; align-items: center; padding: 0 11px; justify-content: space-between; }
.tri-down { width: 0; height: 0; border: 6px solid transparent; border-bottom: 0; border-top: 7px solid #888; }
.slider-row { margin: 4px 0 0 6px; width: 354px; flex: 0 0 30px; border: 1px solid #262626; border-radius: 5px; display: flex; align-items: stretch; }
.slider-row.second { margin-top: 7px; }
.sl-lbl { width: 265px; padding-left: 5px; display: flex; align-items: center; border-right: 1px solid #262626; }
.sl-val { width: 54px; padding-left: 10px; display: flex; align-items: center; }
.slider-row .sb { width: 17px; border-left: 1px solid #2c2c2c; }

/* palette */
.palette { flex: 0 0 30px; display: flex; position: relative; }
.swatches { display: flex; padding-top: 12px; }
.sw { width: 16px; height: 16px; margin-right: 1px; flex: none; }
.none { background: #fff; }
.none svg { width: 16px; height: 16px; }
.chev { width: 14px; height: 10px; margin: 14px 0 0 9px; }
.chev + .chev { margin-left: 17px; }
.pal-menu { width: 18px; height: 28px; margin: 1px 0 0 9px; border: 1px solid #262626; border-radius: 5px; display: flex; flex-direction: column; align-items: center; justify-content: center; gap: 3px; }
.pal-menu i { width: 14px; height: 2.500px; background: #eee; }

/* status */
.status { flex: 0 0 49px; display: flex; align-items: center; position: relative; color: #d8d8d8; }
.st-style { display: grid; grid-template-columns: 56px auto; column-gap: 26px; grid-auto-rows: 24px; line-height: 24px; flex: 0 0 120px; margin-top: 2px; }
.st-l { text-align: right; }
.st-o { width: 21px; margin-left: 46px; }
.s-o { width: 73px; height: 49px; }
.s-o .val { padding-left: 9px; }
.spin.s-o { background: none; }
.layer-mark { width: 3px; height: 25px; background: #3a78e8; margin-left: 14px; }
.layer-name { margin-left: 6px; width: 70px; }
.st-eye { width: 17px; height: 15px; margin-left: 6px; }
.st-lock { width: 14px; height: 16px; margin-left: 21px; }
.st-sep { width: 1px; height: 49px; background: #2f2f2f; margin-left: 14px; }
.st-right { margin-left: auto; display: flex; align-items: center; height: 49px; border-left: 1px solid #2f2f2f; padding-right: 19px; padding-left: 9px; }
.coords { display: grid; grid-template-columns: 31px 53px; grid-auto-rows: 24px; line-height: 24px; margin-top: 2px; }
.coords .num { text-align: right; white-space: nowrap; }
.st-z { margin-left: 10px; width: 14px; }
.s-z { width: 111px; height: 49px; }
.s-z .val { padding-left: 14px; }
.spin.s-z .sb, .spin.s-r .sb { width: 21px; }
.st-r { margin-left: 12px; width: 14px; }
.s-r { width: 121px; height: 49px; }
.s-r .val { padding-left: 19px; }

/* annotations over the screenshot */
.anno-controls { position: absolute; left: 0; top: 108px; width: 775px; height: 54px; border: 2.500px solid #f00; box-shadow: 4px 4px 4px rgba(140,140,140,.4), inset 3px 3px 4px rgba(140,140,140,.3); }
.anno-tool { position: absolute; left: 2px; top: 285px; width: 32px; height: 38px; border: 2.500px solid #f00; box-shadow: 3px 3px 4px rgba(140,140,140,.4); }
.anno-arrows { position: absolute; left: 0; top: 0; width: 1920px; height: 1009px; filter: drop-shadow(2px 2px 2px rgba(0,0,0,.35)); }
.anno-note { position: absolute; left: 156px; top: 283px; width: 226px; height: 73px; border: 2.500px solid #f00; color: #f00; background: #d0d0d0; font: 21.300px/24px "Liberation Sans", Arial, sans-serif; text-align: center; }
.note-text { margin-top: -2.500px; }
```
